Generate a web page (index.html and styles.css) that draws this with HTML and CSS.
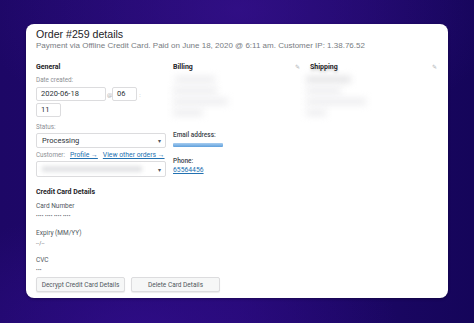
FILE: index.html
```html
<!DOCTYPE html>
<html>
<head>
<meta charset="utf-8">
<link rel="stylesheet" href="styles.css">
</head>
<body>
<div class="card">
  <h1 class="title">Order #259 details</h1>
  <p class="sub">Payment via Offline Credit Card. Paid on June 18, 2020 @ 6:11 am. Customer IP: 1.38.76.52</p>
  <div class="cols">
    <div class="col">
      <h3 class="head">General</h3>
      <div class="label">Date created:</div>
      <div class="daterow">
        <span class="field w-date">2020-06-18</span>
        <span class="sep">@</span>
        <span class="field w-hour">06</span>
        <span class="sep">:</span>
      </div>
      <div class="daterow">
        <span class="field w-hour">11</span>
      </div>
      <div class="label lbl-status">Status:</div>
      <div class="select"><span>Processing</span><span class="caret">▾</span></div>
      <div class="custrow">
        <span class="label inline">Customer:</span>
        <a class="link">Profile →</a>
        <a class="link">View other orders →</a>
      </div>
      <div class="select tall"><span class="blurbar"></span><span class="caret">▾</span></div>
    </div>
    <div class="col">
      <div class="headrow"><h3 class="head">Billing</h3><span class="pencil">✎</span></div>
      <div class="blurblock">
        <span class="bl b1"></span>
        <span class="bl b2"></span>
        <span class="bl b3"></span>
        <span class="bl b4"></span>
      </div>
      <div class="klabel">Email address:</div>
      <div class="emailbar"></div>
      <div class="klabel phone">Phone:</div>
      <a class="link phoneno">65564456</a>
    </div>
    <div class="col">
      <div class="headrow"><h3 class="head shiphead">Shipping</h3><span class="pencil">✎</span></div>
      <div class="blurblock ship">
        <span class="bl s1"></span>
        <span class="bl s2"></span>
        <span class="bl s3"></span>
        <span class="bl s4"></span>
      </div>
    </div>
  </div>
  <h3 class="head cc">Credit Card Details</h3>
  <div class="cclabel first">Card Number</div>
  <div class="ccval">•••• •••• •••• ••••</div>
  <div class="cclabel">Expiry (MM/YY)</div>
  <div class="ccval">--/--</div>
  <div class="cclabel">CVC</div>
  <div class="ccval">•••</div>
  <div class="btns">
    <button class="btn">Decrypt Credit Card Details</button>
    <button class="btn">Delete Card Details</button>
  </div>
</div>
</body>
</html>
```
FILE: styles.css
```css
html, body { margin: 0; padding: 0; }
body {
  width: 474px;
  height: 323px;
  box-sizing: border-box;
  padding: 24px 26px 0 26px;
  background:
    radial-gradient(ellipse 260px 140px at 240px 10px, rgba(60, 20, 150, 0.55), rgba(60, 20, 150, 0) 100%),
    radial-gradient(ellipse 260px 120px at 140px 330px, rgba(55, 15, 150, 0.6), rgba(55, 15, 150, 0) 100%),
    linear-gradient(90deg, #1d0766 0%, #22086f 50%, #15055a 100%);
  font-family: Roboto, "Liberation Sans", Arial, sans-serif;
  overflow: hidden;
}
.card {
  background: #fff;
  border-radius: 8px;
  height: 274px;
  box-sizing: border-box;
  padding: 4px 8px 0 10px;
  box-shadow: 0 1px 3px rgba(0,0,0,0.3);
}
.title {
  font-family: "Liberation Sans", Arial, sans-serif;
  font-weight: 400;
  font-size: 10.6px;
  line-height: 13px;
  color: #1d2327;
  margin: 0;
}
.sub {
  font-family: "Liberation Sans", Arial, sans-serif;
  font-size: 8px;
  line-height: 10px;
  color: #787c82;
  margin: 0;
}
.cols {
  display: grid;
  grid-template-columns: 130px 130px 130px;
  column-gap: 7px;
  margin-top: 11px;
}
.head {
  font-size: 7px;
  font-weight: 700;
  color: #1d2327;
  margin: 0;
  line-height: 10px;
}
.headrow {
  display: flex;
  justify-content: space-between;
  align-items: center;
}
.pencil {
  font-size: 6px;
  color: #b0b4b8;
  line-height: 10px;
  margin-right: 3px;
}
.shiphead { text-shadow: 0 2px 3px rgba(0,0,0,0.2); }
.label {
  font-size: 6.3px;
  color: #8c8f94;
  line-height: 9px;
  margin-top: 4px;
}
.label.inline { margin: 0; }
.lbl-status { margin-top: 6px; }
.daterow {
  display: flex;
  align-items: center;
  margin-top: 2px;
  gap: 1px;
}
.field {
  box-sizing: border-box;
  border: 1px solid #dcdcde;
  border-radius: 2px;
  height: 14px;
  font-size: 7.5px;
  line-height: 12px;
  padding: 0 4px;
  color: #2c3338;
  background: #fff;
}
.w-date { width: 70px; }
.w-hour { width: 25px; }
.sep { font-size: 6px; color: #a7aaad; width: 4px; text-align: center; }
.select {
  box-sizing: border-box;
  width: 130px;
  height: 15px;
  margin-top: 1px;
  border: 1px solid #dcdcde;
  border-radius: 2px;
  display: flex;
  align-items: center;
  justify-content: space-between;
  padding: 0 4px 0 5px;
  font-size: 7.5px;
  color: #2c3338;
}
.select.tall { height: 16px; }
.caret { font-size: 6px; color: #50575e; }
.custrow {
  display: flex;
  align-items: center;
  gap: 5px;
  margin-top: 3px;
  font-size: 6.3px;
  line-height: 9px;
}
.link {
  color: #2271b1;
  text-decoration: underline;
  font-size: 6.8px;
}
.blurbar {
  display: block;
  width: 100px;
  height: 6px;
  background: #e2e3e5;
  filter: blur(2px);
}
.blurblock {
  height: 55px;
  margin-top: 2px;
}
.bl {
  display: block;
  height: 7px;
  background: #eeeef0;
  filter: blur(3.5px);
  margin-top: 4px;
}
.b1 { width: 40px; margin-left: 2px; }
.b2 { width: 44px; }
.b3 { width: 55px; }
.b4 { width: 30px; }
.ship { margin-left: -4px; margin-top: 0; }
.s1 { width: 45px; background: #e4e4e6; }
.s2 { width: 35px; }
.s3 { width: 60px; }
.s4 { width: 20px; }
.klabel {
  font-size: 6.5px;
  font-weight: 500;
  color: #3c434a;
  line-height: 9px;
}
.emailbar {
  width: 50px;
  height: 4px;
  margin-top: 3px;
  background: linear-gradient(#a8cdf0, #5fa0dc);
  border-radius: 1px;
  filter: blur(0.6px);
}
.phone { margin-top: 10px; }
.phoneno { display: block; line-height: 9px; }
.cc { margin-top: 10px; }
.cclabel {
  font-size: 6.5px;
  color: #50575e;
  line-height: 9px;
  margin-top: 9px;
}
.cclabel.first { margin-top: 5px; }
.ccval {
  font-size: 5px;
  color: #50575e;
  line-height: 7px;
  margin-top: 2px;
  letter-spacing: 0.2px;
}
.btns {
  display: flex;
  gap: 6px;
  margin-top: 3px;
}
.btn {
  box-sizing: border-box;
  width: 89px;
  height: 15px;
  border: 1px solid #dcdcde;
  border-radius: 2px;
  background: #f6f7f7;
  font-family: Roboto, "Liberation Sans", Arial, sans-serif;
  font-size: 6.5px;
  color: #50575e;
  padding: 0;
  box-shadow: 0 1px 1px rgba(0,0,0,0.08);
}
```
